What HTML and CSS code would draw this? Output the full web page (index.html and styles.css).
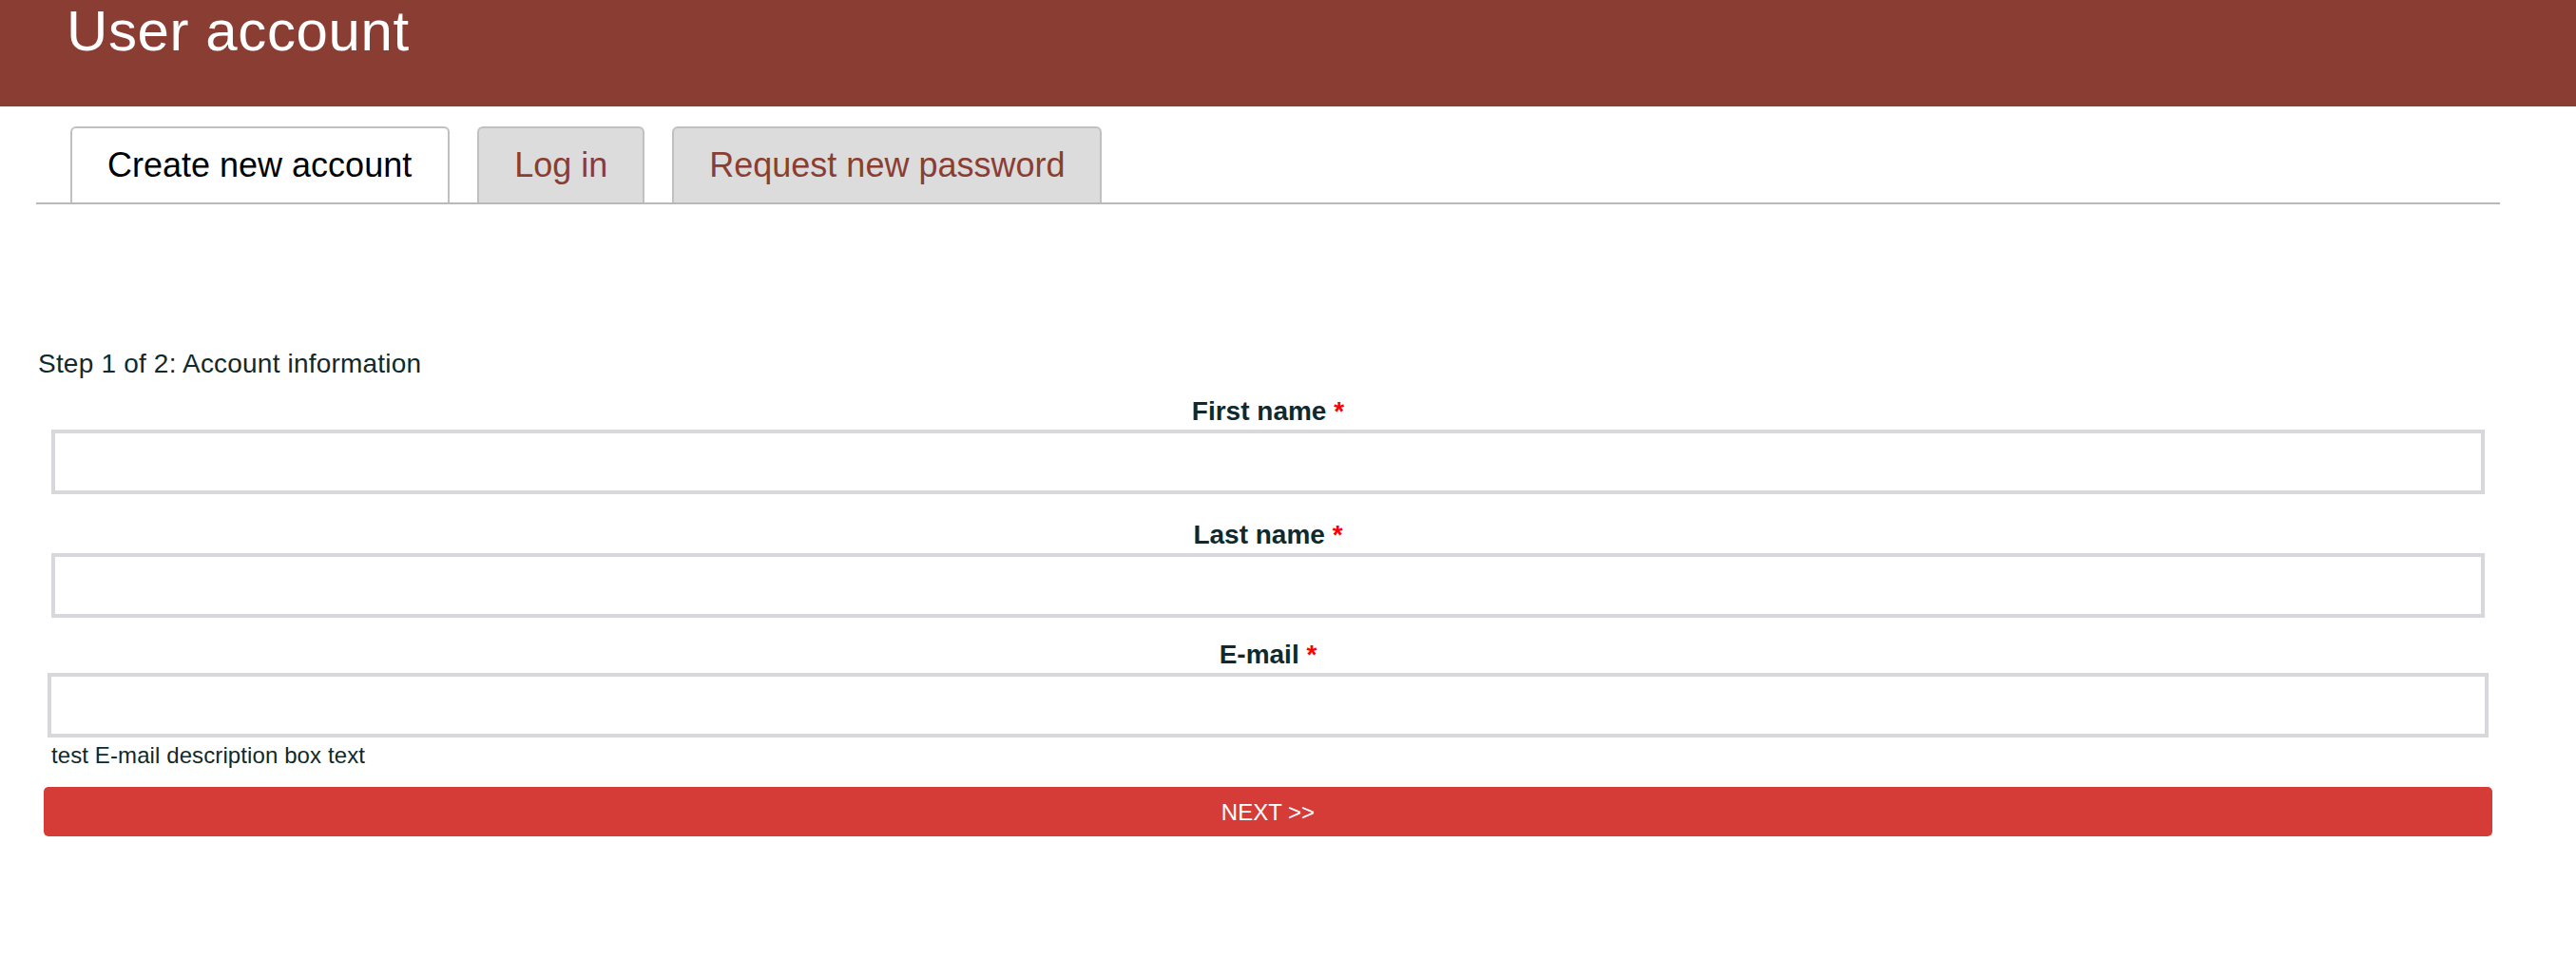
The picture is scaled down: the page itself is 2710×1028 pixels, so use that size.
FILE: index.html
```html
<!DOCTYPE html>
<html lang="en">
<head>
<meta charset="utf-8">
<title>User account</title>
<link rel="stylesheet" href="styles.css">
</head>
<body>
<header class="site-header">
  <h1 class="page-title">User account</h1>
</header>
<nav class="tabs">
  <a class="tab tab-active" href="#">Create new account</a>
  <a class="tab" href="#">Log in</a>
  <a class="tab" href="#">Request new password</a>
</nav>
<main class="main">
  <div class="step">Step 1 of 2: Account information</div>
  <form class="form">
    <div class="field">
      <label class="label">First name <span class="req">*</span></label>
      <input class="input" type="text">
    </div>
    <div class="field">
      <label class="label">Last name <span class="req">*</span></label>
      <input class="input" type="text">
    </div>
    <div class="field field-email">
      <label class="label">E-mail <span class="req">*</span></label>
      <input class="input input-wide" type="text">
      <div class="description">test E-mail description box text</div>
    </div>
    <button class="next" type="button">NEXT &gt;&gt;</button>
  </form>
</main>
</body>
</html>
```

FILE: styles.css
```css
html, body {
  margin: 0;
  padding: 0;
  background: #ffffff;
}

body {
  font-family: "Liberation Sans", Arial, Helvetica, sans-serif;
  color: #102a2c;
}

.site-header {
  height: 112px;
  background: #8a3e33;
  box-sizing: border-box;
  padding-left: 70px;
}

.page-title {
  margin: 0;
  font-size: 60px;
  font-weight: normal;
  line-height: 66px;
  letter-spacing: 0.6px;
  color: #ffffff;
}

.tabs {
  display: flex;
  align-items: flex-end;
  margin: 21px 80px 0 38px;
  padding-left: 36px;
  border-bottom: 2px solid #b9b9b9;
}

.tab {
  display: block;
  height: 78px;
  line-height: 78px;
  padding: 0 37px;
  margin-right: 29px;
  border: 2px solid #c0c0c0;
  border-bottom: none;
  border-radius: 6px 6px 0 0;
  background: #dcdcdc;
  color: #8a3e33;
  font-size: 36px;
  text-decoration: none;
  white-space: nowrap;
}

.tab-active {
  background: #ffffff;
  color: #000000;
  padding: 0 38px 0 37px;
}

.main {
  margin-left: 40px;
  padding-top: 151px;
}

.step {
  font-size: 28px;
  line-height: 34px;
  letter-spacing: 0.2px;
  color: #102a2c;
}

.form {
  margin: 16px 0 0 6px;
  width: 2576px;
}

.field {
  margin-bottom: 26px;
}

.field + .field-email {
  margin-top: -4px;
}

.field-email {
  margin-bottom: 18px;
}

.label {
  display: block;
  text-align: center;
  font-size: 28px;
  line-height: 34px;
  font-weight: bold;
  color: #0e2a2e;
  margin-bottom: 2px;
}

.req {
  color: #ff0000;
}

.input {
  display: block;
  box-sizing: border-box;
  width: 2560px;
  height: 68px;
  margin: 0 8px;
  padding: 0 10px;
  border: 4px solid #d8d8dc;
  border-radius: 0;
  background: #ffffff;
  font-family: "Liberation Sans", Arial, sans-serif;
  font-size: 28px;
  outline: none;
}

.input-wide {
  width: 2568px;
  margin: 0 4px;
}

.description {
  margin: 4px 0 0 8px;
  font-size: 24px;
  line-height: 30px;
  letter-spacing: 0.1px;
  color: #102a2c;
}

.next {
  display: block;
  box-sizing: border-box;
  width: 2576px;
  height: 52px;
  padding: 2px 0 0 0;
  border: none;
  border-radius: 5px;
  background: #d63c37;
  color: #ffffff;
  font-family: "Liberation Sans", Arial, sans-serif;
  font-size: 24px;
  line-height: 50px;
  text-align: center;
}
```
